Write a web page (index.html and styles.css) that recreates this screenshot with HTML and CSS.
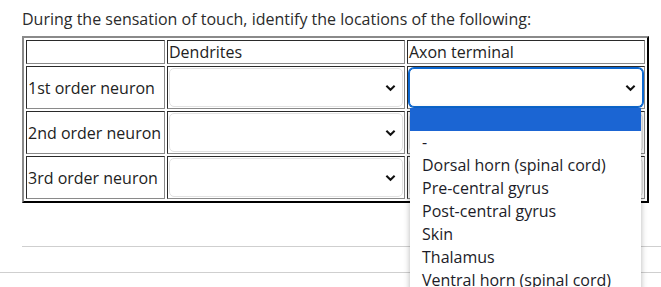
FILE: index.html
```html
<!DOCTYPE html>
<html lang="en">
<head>
<meta charset="UTF-8">
<meta name="viewport" content="width=device-width, initial-scale=1.0">
<title>Touch pathway</title>
<link rel="stylesheet" href="styles.css">
</head>
<body>

<div class="question">
    <div class="question-text">During the sensation of touch, identify the locations of the following:</div>

    <table class="answer-table">
        <colgroup>
            <col class="col-label">
            <col class="col-choice">
            <col class="col-choice">
        </colgroup>
        <tr class="head-row">
            <td></td>
            <td>Dendrites</td>
            <td>Axon terminal</td>
        </tr>
        <tr>
            <td>1st order neuron</td>
            <td>
                <div class="select-wrap">
                    <select class="choice"><option></option></select>
                    <svg class="chevron" viewBox="0 0 12 8"><path d="M1.5 1.5 6 6l4.5-4.5" /></svg>
                </div>
            </td>
            <td>
                <div class="select-wrap">
                    <select class="choice is-open"><option></option></select>
                    <svg class="chevron" viewBox="0 0 12 8"><path d="M1.5 1.5 6 6l4.5-4.5" /></svg>
                    <!-- the opened list of the focused select -->
                    <ul class="option-list">
                        <li class="selected">&nbsp;</li>
                        <li>-</li>
                        <li>Dorsal horn (spinal cord)</li>
                        <li>Pre-central gyrus</li>
                        <li>Post-central gyrus</li>
                        <li>Skin</li>
                        <li>Thalamus</li>
                        <li>Ventral horn (spinal cord)</li>
                    </ul>
                </div>
            </td>
        </tr>
        <tr>
            <td>2nd order neuron</td>
            <td>
                <div class="select-wrap">
                    <select class="choice"><option></option></select>
                    <svg class="chevron" viewBox="0 0 12 8"><path d="M1.5 1.5 6 6l4.5-4.5" /></svg>
                </div>
            </td>
            <td>
                <div class="select-wrap">
                    <select class="choice"><option></option></select>
                    <svg class="chevron" viewBox="0 0 12 8"><path d="M1.5 1.5 6 6l4.5-4.5" /></svg>
                </div>
            </td>
        </tr>
        <tr>
            <td>3rd order neuron</td>
            <td>
                <div class="select-wrap">
                    <select class="choice"><option></option></select>
                    <svg class="chevron" viewBox="0 0 12 8"><path d="M1.5 1.5 6 6l4.5-4.5" /></svg>
                </div>
            </td>
            <td>
                <div class="select-wrap">
                    <select class="choice"><option></option></select>
                    <svg class="chevron" viewBox="0 0 12 8"><path d="M1.5 1.5 6 6l4.5-4.5" /></svg>
                </div>
            </td>
        </tr>
    </table>

    <div class="divider inner"></div>
</div>
<div class="divider outer"></div>

</body>
</html>
```

FILE: styles.css
```css
body {
    margin: 0;
    padding-bottom: 40px;
    font-family: 'Open Sans', 'Noto Sans', sans-serif;
    font-size: 16px;
    color: #222;
    background: #fff;
}

.question {
    padding: 8px 0 0 22px;
}

.question-text {
    line-height: 22px;
    color: #2b2b2b;
    margin-bottom: 6px;
}

.answer-table {
    width: 627px;
    table-layout: fixed;
    border: 2px outset #808080;
    border-color: #8a8a8a #2a2a2a #2a2a2a #8a8a8a;
    border-spacing: 2px;
}

.col-label {
    width: 139px;
}

.answer-table td {
    padding: 1px;
    border: 1px solid;
    border-color: #2a2a2a #8a8a8a #8a8a8a #2a2a2a;
    line-height: 20px;
    white-space: nowrap;
    vertical-align: middle;
    overflow: visible;
}

.select-wrap {
    position: relative;
    height: 39px;
}

.choice {
    display: block;
    width: 100%;
    height: 39px;
    margin: 0;
    -webkit-appearance: none;
    appearance: none;
    background: #fff;
    border: 1px solid #e2e2e2;
    border-radius: 5px;
    font: inherit;
    color: #222;
}

.choice.is-open {
    border-color: #0c68d1;
    box-shadow: 0 0 0 1px #0c68d1;
    outline: none;
}

.chevron {
    position: absolute;
    right: 7px;
    top: 16px;
    width: 11px;
    height: 8px;
    fill: none;
    stroke: #111;
    stroke-width: 2.2;
    pointer-events: none;
}

.option-list {
    position: absolute;
    top: 40px;
    left: 1px;
    right: 2px;
    margin: 0;
    padding: 0;
    list-style: none;
    background: #fff;
    box-shadow: 0 2px 6px rgba(0, 0, 0, 0.3);
    z-index: 5;
    color: #1c1c28;
}

.option-list li {
    height: 23px;
    line-height: 23px;
    padding-left: 12px;
    white-space: nowrap;
}

.option-list li.selected {
    background: #1b65d3;
}

.divider {
    height: 1px;
    background: #cfcfcf;
}

.divider.inner {
    margin-top: 43px;
}

.divider.outer {
    margin-top: 25px;
}
```
